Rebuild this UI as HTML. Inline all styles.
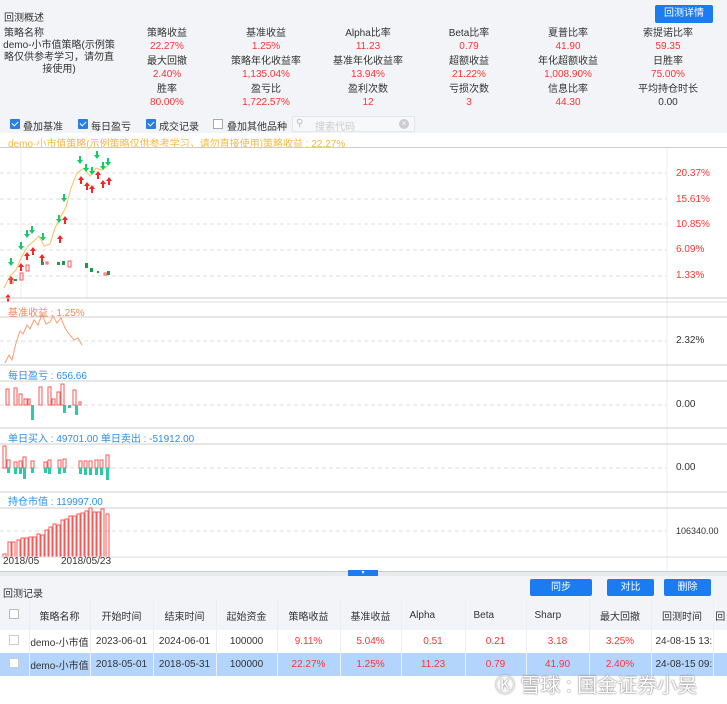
<!DOCTYPE html>
<html><head><meta charset="utf-8">
<style>
*{margin:0;padding:0;box-sizing:border-box}
body{width:727px;height:704px;overflow:hidden;background:#fff;font-family:"Liberation Sans","Noto Sans CJK SC",sans-serif;font-size:10px;color:#333;position:relative}
.a{position:absolute;white-space:nowrap}
.top{position:absolute;left:0;top:0;width:727px;height:133px;background:#f2f4f7}
.btn{position:absolute;background:#1a7cf0;color:#fff;font-size:10px;text-align:center;border-radius:2px}
.st{position:absolute;width:100px;text-align:center;font-size:10px;line-height:13px}
.st b{display:block;font-weight:normal;color:#f33}
.cb{position:absolute;width:10px;height:10px;background:#2b7de1;border-radius:1px}
.cb:after{content:"";position:absolute;left:3px;top:1px;width:3px;height:5px;border:solid #fff;border-width:0 1.3px 1.3px 0;transform:rotate(45deg)}
.ttl{position:absolute;left:8px;font-size:10px}
.ax{position:absolute;left:676px;font-size:10px}
table{border-collapse:collapse;position:absolute;left:0;top:600px;width:727px;font-size:10px}
td{height:23px;text-align:center;border-right:1px solid #eee;white-space:nowrap;overflow:hidden}
.r{color:#f33}
</style></head><body>
<div class="top"></div>
<div class="a" style="left:4px;top:9px">回测概述</div>
<div class="btn" style="left:655px;top:5px;width:58px;height:18px;line-height:18px">回测详情</div>
<div class="a" style="left:4px;top:28px;line-height:12px">策略名称</div>
<div class="a" style="left:2px;top:40px;line-height:12px;text-align:center;white-space:normal;width:114px">demo-小市值策略(示例策略仅供参考学习，请勿直接使用)</div>
<div class="st" style="left:117px;top:27px">策略收益<b>22.27%</b></div>
<div class="st" style="left:216px;top:27px">基准收益<b>1.25%</b></div>
<div class="st" style="left:318px;top:27px">Alpha比率<b>11.23</b></div>
<div class="st" style="left:419px;top:27px">Beta比率<b>0.79</b></div>
<div class="st" style="left:518px;top:27px">夏普比率<b>41.90</b></div>
<div class="st" style="left:618px;top:27px">索提诺比率<b>59.35</b></div>
<div class="st" style="left:117px;top:55px">最大回撤<b>2.40%</b></div>
<div class="st" style="left:216px;top:55px">策略年化收益率<b>1,135.04%</b></div>
<div class="st" style="left:318px;top:55px">基准年化收益率<b>13.94%</b></div>
<div class="st" style="left:419px;top:55px">超额收益<b>21.22%</b></div>
<div class="st" style="left:518px;top:55px">年化超额收益<b>1,008.90%</b></div>
<div class="st" style="left:618px;top:55px">日胜率<b>75.00%</b></div>
<div class="st" style="left:117px;top:83px">胜率<b>80.00%</b></div>
<div class="st" style="left:216px;top:83px">盈亏比<b>1,722.57%</b></div>
<div class="st" style="left:318px;top:83px">盈利次数<b>12</b></div>
<div class="st" style="left:419px;top:83px">亏损次数<b>3</b></div>
<div class="st" style="left:518px;top:83px">信息比率<b>44.30</b></div>
<div class="st" style="left:618px;top:83px">平均持仓时长<b style="color:#333">0.00</b></div>
<div class="cb" style="left:10px;top:119px"></div><div class="a" style="left:23px;top:118px">叠加基准</div>
<div class="cb" style="left:78px;top:119px"></div><div class="a" style="left:91px;top:118px">每日盈亏</div>
<div class="cb" style="left:146px;top:119px"></div><div class="a" style="left:159px;top:118px">成交记录</div>
<div class="a" style="left:213px;top:119px;width:10px;height:10px;border:1px solid #aaa;background:#fff"></div><div class="a" style="left:227px;top:118px">叠加其他品种</div>
<div class="a" style="left:292px;top:116px;width:123px;height:16px;background:#f7f8fa;border:1px solid #e4e6ea"></div>
<div class="a" style="left:296px;top:118px;color:#bbb">&#9906;</div>
<div class="a" style="left:315px;top:118px;color:#ccc">搜索代码</div>
<div class="a" style="left:399px;top:119px;width:10px;height:10px;border-radius:50%;background:#ccc;color:#fff;font-size:8px;line-height:10px;text-align:center">×</div>
<div class="ttl" style="top:135px;color:#f5b942">demo-小市值策略(示例策略仅供参考学习，请勿直接使用)策略收益 : 22.27%</div>
<svg class="a" style="left:0;top:147px" width="727" height="431">
<line x1="0" y1="0.5" x2="727" y2="0.5" stroke="#ccc"/>
<g transform="translate(0,1)">
<g stroke="#ddd" stroke-dasharray="4,3" stroke-width="1">
<line x1="0" y1="25" x2="667" y2="25"/><line x1="0" y1="51" x2="667" y2="51"/><line x1="0" y1="76" x2="667" y2="76"/><line x1="0" y1="102" x2="667" y2="102"/><line x1="0" y1="128" x2="667" y2="128"/>
<line x1="0" y1="193" x2="667" y2="193"/><line x1="0" y1="257" x2="667" y2="257"/><line x1="0" y1="320" x2="667" y2="320"/><line x1="0" y1="383" x2="667" y2="383"/>
</g>
<line x1="667" y1="0" x2="667" y2="430" stroke="#eee"/>
<line x1="21" y1="0" x2="21" y2="150" stroke="#eee"/><line x1="87" y1="0" x2="87" y2="150" stroke="#eee"/>
<polyline fill="none" stroke="#f5c060" stroke-width="1" points="4,140 10,128 16,122 22,108 28,98 34,93 39,88 44,98 50,96 55,80 60,70 66,59 71,40 77,25 84,20 90,28 96,20 102,22 108,18"/>
<g fill="#f22">
<path d="M5,150 l3,-4 3,4 h-2 v4 h-2 v-4z"/><path d="M8,132 l3,-4 3,4 h-2 v4 h-2 v-4z"/><path d="M18,119 l3,-4 3,4 h-2 v4 h-2 v-4z"/><path d="M24,108 l3,-4 3,4 h-2 v4 h-2 v-4z"/><path d="M30,103 l3,-4 3,4 h-2 v4 h-2 v-4z"/><path d="M39,110 l3,-4 3,4 h-2 v4 h-2 v-4z"/><path d="M57,91 l3,-4 3,4 h-2 v4 h-2 v-4z"/><path d="M62,72 l3,-4 3,4 h-2 v4 h-2 v-4z"/><path d="M78,32 l3,-4 3,4 h-2 v4 h-2 v-4z"/><path d="M84,38 l3,-4 3,4 h-2 v4 h-2 v-4z"/><path d="M89,41 l3,-4 3,4 h-2 v4 h-2 v-4z"/><path d="M95,27 l3,-4 3,4 h-2 v4 h-2 v-4z"/><path d="M100,36 l3,-4 3,4 h-2 v4 h-2 v-4z"/><path d="M106,33 l3,-4 3,4 h-2 v4 h-2 v-4z"/>
</g>
<g fill="#1c6">
<path d="M8,114 h2 v-4 h2 v4 h2 l-3,4z"/><path d="M18,98 h2 v-4 h2 v4 h2 l-3,4z"/><path d="M24,86 h2 v-4 h2 v4 h2 l-3,4z"/><path d="M29,82 h2 v-4 h2 v4 h2 l-3,4z"/><path d="M40,89 h2 v-4 h2 v4 h2 l-3,4z"/><path d="M56,71 h2 v-4 h2 v4 h2 l-3,4z"/><path d="M61,50 h2 v-4 h2 v4 h2 l-3,4z"/><path d="M77,12 h2 v-4 h2 v4 h2 l-3,4z"/><path d="M83,20 h2 v-4 h2 v4 h2 l-3,4z"/><path d="M89,23 h2 v-4 h2 v4 h2 l-3,4z"/><path d="M94,7 h2 v-4 h2 v4 h2 l-3,4z"/><path d="M100,18 h2 v-4 h2 v4 h2 l-3,4z"/><path d="M105,14 h2 v-4 h2 v4 h2 l-3,4z"/>
</g>
<g stroke="#f55" fill="none"><rect x="10" y="130" width="3" height="5"/><rect x="20" y="125" width="3" height="7"/><rect x="26" y="117" width="3" height="6"/><rect x="46" y="114" width="2" height="2"/><rect x="68" y="113" width="3" height="6"/><rect x="104" y="125" width="3" height="2"/></g>
<g fill="#1a9a50"><rect x="14" y="131" width="3" height="2"/><rect x="41" y="114" width="3" height="3"/><rect x="57" y="114" width="3" height="3"/><rect x="62" y="113" width="3" height="4"/><rect x="85" y="115" width="3" height="5"/><rect x="90" y="120" width="3" height="4"/><rect x="97" y="123" width="2" height="2"/><rect x="107" y="123" width="3" height="4"/></g>
<line x1="0" y1="150" x2="727" y2="150" stroke="#ccc"/>
<line x1="0" y1="154" x2="727" y2="154" stroke="#ddd"/>
<line x1="0" y1="169" x2="727" y2="169" stroke="#ccc"/>
<polyline fill="none" stroke="#f5a070" points="5,215 9,207 12,212 16,195 20,183 23,186 27,177 30,181 34,172 38,177 42,166 46,176 50,174 53,168 57,175 61,170 65,180 69,186 74,192 78,190 82,197"/>
<line x1="0" y1="217" x2="727" y2="217" stroke="#ccc"/>
<line x1="0" y1="233" x2="727" y2="233" stroke="#ccc"/>
<g stroke="#f55" fill="none"><rect x="6" y="241" width="3" height="16"/><rect x="14" y="240" width="3" height="17"/><rect x="19" y="246" width="3" height="11"/><rect x="24" y="251" width="3" height="6"/><rect x="28" y="251" width="2" height="6"/><rect x="39" y="239" width="3" height="18"/><rect x="48" y="239" width="3" height="18"/><rect x="52" y="251" width="3" height="6"/><rect x="57" y="244" width="3" height="13"/><rect x="61" y="236" width="3" height="21"/><rect x="73" y="242" width="3" height="15"/><rect x="79" y="254" width="2" height="3"/></g>
<g fill="#2dc9a8"><rect x="31" y="257" width="3" height="15"/><rect x="63" y="257" width="3" height="8"/><rect x="68" y="257" width="3" height="3"/><rect x="75" y="257" width="3" height="10"/></g>
<line x1="0" y1="280" x2="727" y2="280" stroke="#ccc"/>
<line x1="0" y1="296" x2="727" y2="296" stroke="#ccc"/>
<g stroke="#f55" fill="none"><rect x="3" y="298" width="3" height="22"/><rect x="7" y="312" width="3" height="8"/><rect x="14" y="314" width="3" height="6"/><rect x="19" y="313" width="3" height="7"/><rect x="23" y="309" width="3" height="11"/><rect x="31" y="313" width="3" height="7"/><rect x="44" y="314" width="3" height="6"/><rect x="48" y="312" width="3" height="8"/><rect x="58" y="312" width="3" height="8"/><rect x="63" y="311" width="3" height="9"/><rect x="79" y="313" width="3" height="7"/><rect x="84" y="313" width="3" height="7"/><rect x="89" y="313" width="3" height="7"/><rect x="95" y="312" width="3" height="8"/><rect x="100" y="312" width="3" height="8"/><rect x="106" y="307" width="3" height="13"/></g>
<g fill="#2dc9a8"><rect x="7" y="320" width="3" height="5"/><rect x="14" y="320" width="3" height="6"/><rect x="19" y="320" width="3" height="6"/><rect x="23" y="320" width="3" height="11"/><rect x="31" y="320" width="3" height="5"/><rect x="44" y="320" width="3" height="5"/><rect x="48" y="320" width="3" height="6"/><rect x="58" y="320" width="3" height="6"/><rect x="63" y="320" width="3" height="5"/><rect x="79" y="320" width="3" height="6"/><rect x="84" y="320" width="3" height="7"/><rect x="89" y="320" width="3" height="7"/><rect x="95" y="320" width="3" height="7"/><rect x="100" y="320" width="3" height="7"/><rect x="106" y="320" width="3" height="12"/></g>
<line x1="0" y1="344" x2="727" y2="344" stroke="#ccc"/>
<line x1="0" y1="360" x2="727" y2="360" stroke="#ccc"/>
<g stroke="#f55" fill="none"><rect x="3" y="406" width="3" height="3"/><rect x="8" y="394" width="3" height="15"/><rect x="12" y="394" width="3" height="15"/><rect x="17" y="392" width="3" height="17"/><rect x="21" y="390" width="3" height="19"/><rect x="25" y="390" width="3" height="19"/><rect x="29" y="389" width="3" height="20"/><rect x="33" y="389" width="3" height="20"/><rect x="37" y="386" width="3" height="23"/><rect x="41" y="387" width="3" height="22"/><rect x="45" y="382" width="3" height="27"/><rect x="49" y="379" width="3" height="30"/><rect x="53" y="376" width="3" height="33"/><rect x="57" y="377" width="3" height="32"/><rect x="61" y="372" width="3" height="37"/><rect x="65" y="371" width="3" height="38"/><rect x="69" y="368" width="3" height="41"/><rect x="73" y="368" width="3" height="41"/><rect x="77" y="366" width="3" height="43"/><rect x="81" y="365" width="3" height="44"/><rect x="85" y="363" width="3" height="46"/><rect x="89" y="360" width="3" height="49"/><rect x="93" y="364" width="3" height="45"/><rect x="97" y="364" width="3" height="45"/><rect x="101" y="361" width="3" height="48"/><rect x="106" y="366" width="3" height="43"/></g>
<line x1="0" y1="409" x2="727" y2="409" stroke="#ddd"/>
</g>
</svg>
<div class="ax r" style="top:168px">20.37%</div>
<div class="ax r" style="top:194px">15.61%</div>
<div class="ax r" style="top:219px">10.85%</div>
<div class="ax r" style="top:244px">6.09%</div>
<div class="ax r" style="top:270px">1.33%</div>
<div class="ttl" style="top:304px;color:#f5885a">基准收益 : 1.25%</div>
<div class="ax" style="top:335px">2.32%</div>
<div class="ttl" style="top:367px;color:#2b8fe8">每日盈亏 : 656.66</div>
<div class="ax" style="top:399px">0.00</div>
<div class="ttl" style="top:430px;color:#2b8fe8">单日买入 : 49701.00 单日卖出 : -51912.00</div>
<div class="ax" style="top:462px">0.00</div>
<div class="ttl" style="top:493px;color:#2b8fe8">持仓市值 : 119997.00</div>
<div class="ax" style="top:526px;font-size:9px">106340.00</div>
<div class="a" style="left:3px;top:556px">2018/05</div>
<div class="a" style="left:61px;top:556px">2018/05/23</div>
<div class="a" style="left:0;top:571px;width:727px;height:5px;background:#e8eaee;border-top:1px solid #ccc"></div>
<div class="a" style="left:348px;top:570px;width:30px;height:6px;background:#1a7cf0;color:#fff;font-size:6px;text-align:center;line-height:6px">▾</div>
<div class="a" style="left:0;top:576px;width:727px;height:24px;background:#f2f4f7"></div>
<div class="a" style="left:3px;top:585px">回测记录</div>
<div class="btn" style="left:530px;top:579px;width:62px;height:17px;line-height:17px">同步</div>
<div class="btn" style="left:607px;top:579px;width:47px;height:17px;line-height:17px">对比</div>
<div class="btn" style="left:664px;top:579px;width:47px;height:17px;line-height:17px">删除</div>
<table>
<tr style="background:#f2f4f7;height:30px"><td style="width:29px;height:30px"><span style="display:inline-block;width:10px;height:10px;border:1px solid #bbb;background:#fff"></span></td><td style="width:61px">策略名称</td><td style="width:63px">开始时间</td><td style="width:63px">结束时间</td><td style="width:61px">起始资金</td><td style="width:63px">策略收益</td><td style="width:61px">基准收益</td><td style="width:64px;text-align:left;padding-left:8px">Alpha</td><td style="width:61px;text-align:left;padding-left:8px">Beta</td><td style="width:63px;text-align:left;padding-left:8px">Sharp</td><td style="width:62px">最大回撤</td><td style="width:62px">回测时间</td><td style="border:0">回</td></tr>
<tr><td><span style="display:inline-block;width:10px;height:10px;border:1px solid #ccc"></span></td><td>demo-小市值</td><td>2023-06-01</td><td>2024-06-01</td><td>100000</td><td class="r">9.11%</td><td class="r">5.04%</td><td class="r">0.51</td><td class="r">0.21</td><td class="r">3.18</td><td class="r">3.25%</td><td style="text-align:left;padding-left:4px">24-08-15 13:</td><td style="border:0"></td></tr>
<tr style="background:#b3d4fc"><td><span style="display:inline-block;width:10px;height:10px;border:1px solid #ccc;background:#fff"></span></td><td>demo-小市值</td><td>2018-05-01</td><td>2018-05-31</td><td>100000</td><td class="r">22.27%</td><td class="r">1.25%</td><td class="r">11.23</td><td class="r">0.79</td><td class="r">41.90</td><td class="r">2.40%</td><td style="text-align:left;padding-left:4px">24-08-15 09:</td><td style="border:0"></td></tr>
</table>
<div class="a" style="left:495px;top:669px;font-size:20px;color:#fff;text-shadow:0 0 2px #888,0 0 1px #666">Ⓚ 雪球 : 国金证券小吴</div>
</body></html>
